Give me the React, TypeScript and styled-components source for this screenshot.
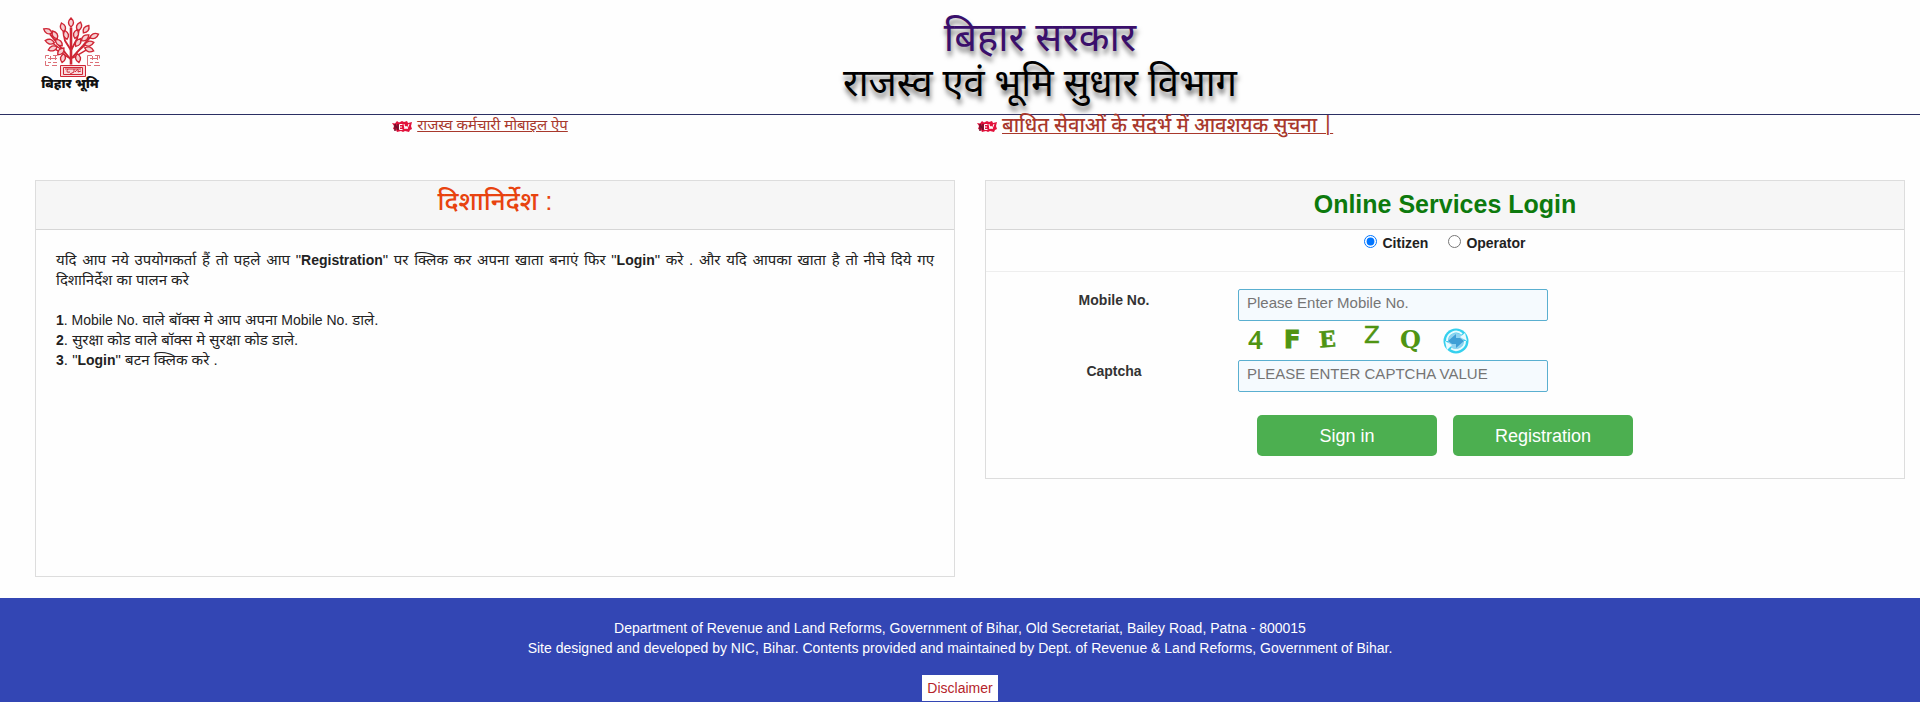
import React from "react";
import styled, { createGlobalStyle } from "styled-components";

const sans = `"Liberation Sans", "Noto Sans Devanagari", "Noto Sans", sans-serif`;
const hindi = `"Noto Sans Devanagari", "Noto Sans", sans-serif`;

const GlobalStyle = createGlobalStyle`
  *, *::before, *::after { box-sizing: border-box; }
  body { margin: 0; background: #fefefe; color: #222; font: 14px/20px ${sans}; }
`;

const Header = styled.header`
  display: grid;
  grid-template-columns: 1fr 11fr;
  height: 115px;
  border-bottom: 1px solid #2b2f63;
`;
const LogoLink = styled.a`
  padding: 15px 0 0 40px;
`;
const Titles = styled.div`
  padding-top: 18px;
  text-align: center;
  font-family: ${hindi};
  text-shadow: 1px 5px 5px #777;
`;
const Title = styled.h1<{ $color: string; $size: number }>`
  margin: 0;
  font-size: ${(p) => p.$size}px;
  line-height: 46px;
  font-weight: 400;
  color: ${(p) => p.$color};
`;

const Notices = styled.nav`
  display: grid;
  grid-template-columns: 1fr 1fr;
  height: 65px;
`;
const Notice = styled.div<{ $align: string }>`
  display: flex;
  justify-content: ${(p) => p.$align};
  align-items: center;
  gap: 5px;
  height: 24px;
  padding: 0 17px;
`;
const NoticeLink = styled.a<{ $strong?: boolean }>`
  color: #a8382c;
  font-family: ${hindi};
  font-size: ${(p) => (p.$strong ? 20 : 15)}px;
  font-weight: ${(p) => (p.$strong ? 500 : 400)};
  line-height: 24px;
  text-decoration-thickness: 1px;
`;

const Columns = styled.main`
  display: grid;
  grid-template-columns: 1fr 1fr;
  gap: 30px;
  align-items: start;
  padding: 0 15px 21px 35px;
`;
const Panel = styled.section<{ $tall?: boolean }>`
  min-height: ${(p) => (p.$tall ? 397 : 299)}px;
  border: 1px solid #ddd;
  background: #fefefe;
`;
const PanelHead = styled.h2<{ $color: string; $top: number; $weight: number; $size: number }>`
  height: 49px;
  margin: 0;
  padding-top: ${(p) => p.$top}px;
  border-bottom: 1px solid #d6d6d6;
  background: #f6f6f6;
  color: ${(p) => p.$color};
  font-size: ${(p) => p.$size}px;
  line-height: 28px;
  font-weight: ${(p) => p.$weight};
  text-align: center;
`;
const Guide = styled.div`
  padding: 20px;
  color: #222;
  font-size: 15px;
  text-align: justify;
`;
const Latin = styled.span<{ $bold?: boolean }>`
  font-size: 14px;
  font-weight: ${(p) => (p.$bold ? 700 : 400)};
`;
const Para = styled.p`
  margin: 0 0 20px;
`;
const Steps = styled.div`
  text-align: left;
`;

const Roles = styled.fieldset`
  display: flex;
  justify-content: center;
  gap: 20px;
  height: 42px;
  margin: 0;
  padding: 3px 0 0;
  border: 0;
  border-bottom: 1px solid #eee;
`;
const Role = styled.label`
  display: flex;
  gap: 5px;
  height: 20px;
  font-weight: 700;
`;
const Radio = styled.input`
  width: 13px;
  height: 13px;
  margin: 2px 0 0;
`;
const Form = styled.form`
  padding: 17px 0 22px;
`;
const Field = styled.div`
  display: grid;
  grid-template-columns: 252px 310px;
`;
const Label = styled.label`
  padding: 1px 0 0 4px;
  text-align: center;
  font-weight: 700;
  color: #333;
`;
const TextBox = styled.input`
  width: 100%;
  height: 32px;
  padding: 0 8px 5px;
  border: 1px solid #5aafd0;
  border-radius: 2px;
  background: #f5fafe;
  color: #444;
  font: 15px/20px ${sans};
  &::placeholder { color: #757575; opacity: 1; }
`;
const CaptchaRow = styled.div`
  display: flex;
  align-items: center;
  gap: 16px;
  height: 39px;
  padding-left: 261px;
`;
const Refresh = styled.button`
  display: flex;
  padding: 0;
  border: 0;
  background: none;
`;
const Actions = styled.div`
  display: flex;
  justify-content: center;
  gap: 16px;
  margin-top: 23px;
`;
const Action = styled.button`
  width: 180px;
  height: 41px;
  border: 0;
  border-radius: 5px;
  background: #4caf50;
  color: #fff;
  font: 18px/20px ${sans};
`;

const Footer = styled.footer`
  display: flex;
  flex-direction: column;
  align-items: center;
  padding: 20px 0 2px;
  background: #3346b4;
  color: #fff;
  text-align: center;
`;
const FootText = styled.p`
  margin: 0;
`;
const Disclaimer = styled.a`
  margin-top: 17px;
  padding: 3px 5px;
  background: #fff;
  color: #b5242b;
  text-decoration: none;
`;

const leaves: [number, number, number][] = [
  [31, 5, 0], [23, 10, -18], [39, 9, 18], [8, 14, -60], [15, 18, -30],
  [46, 12, 35], [54, 19, 65], [45, 21, 50], [26, 18, -12], [36, 17, 14],
  [10, 25, -75], [19, 26, -45], [38, 26, 30], [49, 27, 75],
  [13, 32, -110], [21, 35, -140], [49, 33, 110], [23, 42, -170], [38, 42, 170],
];

function Logo() {
  return (
    <svg width="62" height="78" viewBox="0 0 62 78" role="img" aria-label="बिहार भूमि">
      <g fill="none" stroke="#cf2635" strokeWidth="1.400" transform="translate(0 3) scale(1 .95)">
        <path strokeWidth="2.600" d="M31 49V10" />
        <path strokeWidth="1.900" d="M31 44L20 30L10 17M31 43L43 29L52 18M31 34L25 24L23 12M31 34L37 22L39 12" />
        <path d="M29 42L14 32M33 42L49 32M25 36L12 26M37 36L48 26" />
        {leaves.map(([x, y, r]) => (
          <path key={`${x}-${y}`} transform={`translate(${x} ${y}) rotate(${r})`} fill="#f6cfd2" d="M0 4.500Q-5 0 0-5Q5 0 0 4.500Z" />
        ))}
      </g>
      <g fill="none" stroke="#dc7078">
        <path d="M9 40.500H5.500v3M5.500 46v4.500H9M12 50.500h5M13 40.500h4M8 43.500h9M8 47.500h3M13 47.500h4M10.500 41v4M15.500 41v4" />
        <path d="M52 40.500h-4.500v10H51M54 50.500h6M55 40.500h4.500v3M50 43.500h8M50 47.500h3M55 47.500h4M52.500 41v4M57.500 41v4" />
      </g>
      <g fill="none" stroke="#cf2635">
        <path fill="#f9dadc" d="M20.500 50.500h25v11h-25z" />
        <path d="M23.500 52.500h19v7h-19zM25 54h16M28 54q-3 4 2 3M34 54v3l-4 2M35 57q4-5 3 0l3-1" />
      </g>
      <text x="30" y="73" textAnchor="middle" fontFamily={hindi} fontWeight="900" fontSize="13" fill="#111">बिहार भूमि</text>
    </svg>
  );
}

function NewBadge() {
  return (
    <svg width="20" height="14" viewBox="0 0 20 14" aria-hidden="true">
      <path fill="#e2123c" d="M0 3l3 .5L5 1l2 1.500L10 1l2 1 3-1 1 2 4-1-1 4 1 3-2 1-1 2-4-1-2 1-2-1-4 1-1-2-3-1 1-3z" />
      <path fill="none" stroke="#70102c" strokeWidth="1.500" d="M3 11V4l3 6V4" />
      <path fill="none" stroke="#fff" d="M10.500 4.500h-3v5h3M8 7h2M12 4l1 5 1-3 1 3 2-5" />
    </svg>
  );
}

function Captcha() {
  return (
    <svg width="180" height="39" viewBox="0 0 180 39" role="img" aria-label="Captcha" fill="#4f9413" stroke="#4f9413" fontWeight="700">
      <text x="1" y="28" fontFamily="Noto Sans" fontSize="26" fontWeight="600" strokeWidth="0">4</text>
      <text x="37" y="27" fontFamily="DejaVu Sans" fontSize="24" strokeWidth="1">F</text>
      <text x="72" y="26" fontFamily="DejaVu Serif" fontSize="22" strokeWidth="0.500" transform="rotate(-4 81 19)">E</text>
      <text x="117" y="22" fontFamily="DejaVu Sans" fontSize="23" fontWeight="400" strokeWidth="0.500">Z</text>
      <text x="153" y="27" fontFamily="DejaVu Serif" fontSize="24" strokeWidth="0">Q</text>
    </svg>
  );
}

function RefreshIcon() {
  return (
    <svg width="26" height="26" viewBox="0 0 26 26" aria-hidden="true">
      <circle cx="13" cy="13" r="12.500" fill="#35d0ee" />
      <circle cx="13" cy="13" r="8" fill="#8fd3f0" />
      <path fill="none" stroke="#e9fbff" strokeWidth="2" d="M4 13A9 9 0 0 1 19 6M22 13A9 9 0 0 1 8 20.500" />
      <path fill="#e9fbff" d="M2 13l2 9 5-5zM24 13l-2-8-5 4z" />
      <path fill="#3f9fd6" d="M5 13l8-7v4h4l4 3-8 7v-4h-4z" />
    </svg>
  );
}

export default function App() {
  return (
    <>
      <GlobalStyle />
      <Header>
        <LogoLink href="#"><Logo /></LogoLink>
        <Titles>
          <Title $color="#3a0f6b" $size={40}>बिहार सरकार</Title>
          <Title $color="#000" $size={38}>राजस्व एवं भूमि सुधार विभाग</Title>
        </Titles>
      </Header>
      <Notices>
        <Notice $align="center">
          <NewBadge />
          <NoticeLink href="#">राजस्व कर्मचारी मोबाइल ऐप</NoticeLink>
        </Notice>
        <Notice $align="flex-start">
          <NewBadge />
          <NoticeLink href="#" $strong>बाधित सेवाओं के संदर्भ में आवशयक सुचना |</NoticeLink>
        </Notice>
      </Notices>
      <Columns>
        <Panel $tall>
          <PanelHead $color="#e8430f" $top={6} $weight={500} $size={26}>दिशानिर्देश :</PanelHead>
          <Guide>
            <Para>
              यदि आप नये उपयोगकर्ता हैं तो पहले आप "<Latin $bold>Registration</Latin>" पर क्लिक कर अपना खाता बनाएं फिर "<Latin $bold>Login</Latin>" करे . और यदि आपका खाता है तो नीचे दिये गए दिशानिर्देश का पालन करे
            </Para>
            <Steps>
              <div><Latin $bold>1</Latin><Latin>. Mobile No. </Latin>वाले बॉक्स मे आप अपना <Latin>Mobile No. </Latin>डाले.</div>
              <div><Latin $bold>2</Latin>. सुरक्षा कोड वाले बॉक्स मे सुरक्षा कोड डाले.</div>
              <div><Latin $bold>3</Latin>. "<Latin $bold>Login</Latin>" बटन क्लिक करे .</div>
            </Steps>
          </Guide>
        </Panel>
        <Panel>
          <PanelHead $color="#0d7a0d" $top={9} $weight={700} $size={25}>Online Services Login</PanelHead>
          <Roles aria-label="User type">
            <Role><Radio type="radio" name="role" defaultChecked />Citizen</Role>
            <Role><Radio type="radio" name="role" />Operator</Role>
          </Roles>
          <Form>
            <Field>
              <Label htmlFor="mobile">Mobile No.</Label>
              <TextBox id="mobile" placeholder="Please Enter Mobile No." />
            </Field>
            <CaptchaRow>
              <Captcha />
              <Refresh type="button" aria-label="Refresh captcha"><RefreshIcon /></Refresh>
            </CaptchaRow>
            <Field>
              <Label htmlFor="captcha">Captcha</Label>
              <TextBox id="captcha" placeholder="PLEASE ENTER CAPTCHA VALUE" />
            </Field>
            <Actions>
              <Action type="button">Sign in</Action>
              <Action type="button">Registration</Action>
            </Actions>
          </Form>
        </Panel>
      </Columns>
      <Footer>
        <FootText>Department of Revenue and Land Reforms, Government of Bihar, Old Secretariat, Bailey Road, Patna - 800015</FootText>
        <FootText>Site designed and developed by NIC, Bihar. Contents provided and maintained by Dept. of Revenue &amp; Land Reforms, Government of Bihar.</FootText>
        <Disclaimer href="#">Disclaimer</Disclaimer>
      </Footer>
    </>
  );
}
